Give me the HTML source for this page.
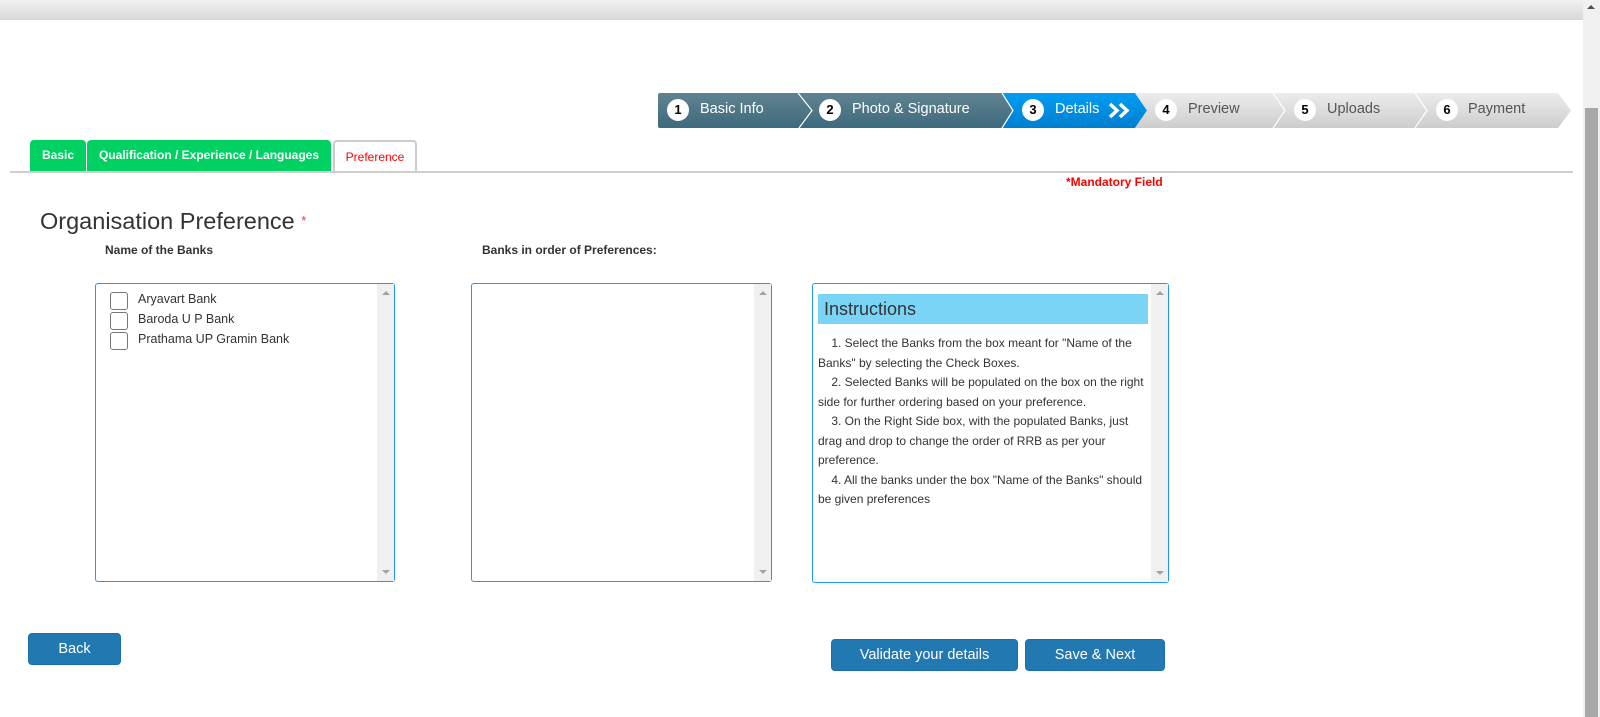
<!DOCTYPE html>
<html><head><style>
body{margin:0;width:1600px;height:717px;overflow:hidden;background:#fff;font-family:"Liberation Sans",Arial,sans-serif;position:relative}
.a{position:absolute}
.topbar{left:0;top:0;width:1583px;height:20px;background:linear-gradient(#f0f0f0,#d8d8d8)}
.sb{left:1583px;top:0;width:17px;height:717px;background:#f0f0f0}
.thumb{left:1585px;top:108px;width:13px;height:609px;background:#a8a8a8}
.circ{width:22px;height:22px;border-radius:50%;background:#fff;color:#000;font-weight:bold;font-size:13px;text-align:center;line-height:22px}
.st{font-size:14.5px;line-height:35px;top:92px}
.tab{top:140px;height:32px;line-height:30px;font-size:12px;font-weight:bold;color:#fff;background:#00d162;border-radius:4px 4px 0 0;text-align:center}
.box{border:1px solid #2196f3;border-radius:3px;background:#fff;box-sizing:border-box}
.scr{position:absolute;right:0;top:0;bottom:0;width:17px;background:#f0f0f0}
.up,.dn{position:absolute;left:5px;width:0;height:0;border-left:4px solid transparent;border-right:4px solid transparent}
.up{top:7px;border-bottom:4px solid #a3a3a3}.dn{bottom:7px;border-top:4px solid #a3a3a3}
.cb{width:16px;height:16px;border:1px solid #767676;border-radius:3px;left:14px}
.it{left:42px;font-size:12.5px;color:#333}
.btn{background:#2278b0;border:1px solid #1a6fa8;border-radius:4px;color:#fff;font-size:14.5px;text-align:center;box-sizing:border-box;line-height:30px}
.ins{font-size:12px;color:#333;line-height:19.5px}
</style></head><body>
<div class="a topbar"></div>
<div class="a sb"></div><div class="a thumb"></div>
<div class="a" style="left:1587px;top:5px;border-left:4px solid transparent;border-right:4px solid transparent;border-bottom:4px solid #505050"></div>

<svg class="a" style="left:0;top:0" width="1600" height="140">
<defs>
<linearGradient id="d" x1="0" y1="0" x2="0" y2="1"><stop offset="0" stop-color="#618391"/><stop offset="1" stop-color="#3d6a7d"/></linearGradient>
<linearGradient id="b" x1="0" y1="0" x2="0" y2="1"><stop offset="0" stop-color="#009df3"/><stop offset="1" stop-color="#007fcf"/></linearGradient>
<linearGradient id="g" x1="0" y1="0" x2="0" y2="1"><stop offset="0" stop-color="#ececec"/><stop offset="1" stop-color="#cdcdcd"/></linearGradient>
</defs>
<path d="M660 93 H798 L812 110.5 L799 128 H660 Q658 128 658 126 V95 Q658 93 660 93Z" fill="url(#d)"/>
<path d="M798 93 H1002 L1013 110.5 L1002 128 H799 L812 110.5Z" fill="url(#d)"/>
<path d="M1002 93 H1135 L1147 110.5 L1135 128 H1002 L1013 110.5Z" fill="url(#b)"/>
<path d="M1135 93 H1273 L1285 110.5 L1273 128 H1135 L1147 110.5Z" fill="url(#g)"/>
<path d="M1273 93 H1415 L1427 110.5 L1415 128 H1273 L1285 110.5Z" fill="url(#g)"/>
<path d="M1415 93 H1558 L1571 110.5 L1558 128 H1415 L1427 110.5Z" fill="url(#g)"/>
<g fill="none" stroke="#fff" stroke-width="1.2">
<path d="M798 93 L812 110.5 L799 128"/><path d="M1002 93 L1013 110.5 L1002 128"/>
<path d="M1273 93 L1285 110.5 L1273 128"/><path d="M1415 93 L1427 110.5 L1415 128"/>
</g>
<g fill="none" stroke="#fff" stroke-width="3.5">
<path d="M1110 104 L1117 110.5 L1110 117"/><path d="M1120 104 L1127 110.5 L1120 117"/>
</g>
</svg>
<div class="a circ" style="left:667px;top:99px">1</div><div class="a st" style="left:700px;color:#fff">Basic Info</div>
<div class="a circ" style="left:819px;top:99px">2</div><div class="a st" style="left:852px;color:#fff">Photo &amp; Signature</div>
<div class="a circ" style="left:1022px;top:99px">3</div><div class="a st" style="left:1055px;color:#fff">Details</div>
<div class="a circ" style="left:1155px;top:99px">4</div><div class="a st" style="left:1188px;color:#555">Preview</div>
<div class="a circ" style="left:1294px;top:99px">5</div><div class="a st" style="left:1327px;color:#555">Uploads</div>
<div class="a circ" style="left:1436px;top:99px">6</div><div class="a st" style="left:1468px;color:#555">Payment</div>

<div class="a tab" style="left:30px;width:56px">Basic</div>
<div class="a tab" style="left:87px;width:244px">Qualification / Experience / Languages</div>
<div class="a tab" style="left:333px;width:84px;background:#fff;border:2px solid #ccc;border-bottom:none;box-sizing:border-box;color:#f00;font-weight:normal">Preference</div>
<div class="a" style="left:10px;top:171px;width:1563px;height:2px;background:#cfcfcf"></div>
<div class="a" style="left:1066px;top:175px;font-size:12px;font-weight:bold;color:#f00">*Mandatory Field</div>

<div class="a" style="left:40px;top:208px;font-size:23.5px;color:#333">Organisation Preference <span style="color:#e33;font-size:13px;vertical-align:4px">*</span></div>
<div class="a" style="left:105px;top:243px;font-size:12px;font-weight:bold;color:#333">Name of the Banks</div>
<div class="a" style="left:482px;top:243px;font-size:12px;font-weight:bold;color:#333">Banks in order of Preferences:</div>

<div class="a box" style="left:95px;top:283px;width:300px;height:299px">
<div class="scr"><div class="up"></div><div class="dn"></div></div>
<div class="a cb" style="top:8px"></div><div class="a it" style="top:8px">Aryavart Bank</div>
<div class="a cb" style="top:28px"></div><div class="a it" style="top:28px">Baroda U P Bank</div>
<div class="a cb" style="top:48px"></div><div class="a it" style="top:48px">Prathama UP Gramin Bank</div>
</div>
<div class="a box" style="left:471px;top:283px;width:301px;height:299px">
<div class="scr"><div class="up"></div><div class="dn"></div></div>
</div>
<div class="a box" style="left:812px;top:283px;width:357px;height:300px">
<div class="scr"><div class="up"></div><div class="dn"></div></div>
<div class="a" style="left:5px;top:10px;width:330px;height:30px;background:#7ad4f5;font-size:18px;color:#333;line-height:30px;padding-left:6px;box-sizing:border-box">Instructions</div>
<div class="a ins" style="left:5px;top:50px;width:330px">
&nbsp;&nbsp;&nbsp;&nbsp;1. Select the Banks from the box meant for "Name of the Banks" by selecting the Check Boxes.<br>
&nbsp;&nbsp;&nbsp;&nbsp;2. Selected Banks will be populated on the box on the right side for further ordering based on your preference.<br>
&nbsp;&nbsp;&nbsp;&nbsp;3. On the Right Side box, with the populated Banks, just drag and drop to change the order of RRB as per your preference.<br>
&nbsp;&nbsp;&nbsp;&nbsp;4. All the banks under the box "Name of the Banks" should be given preferences</div>
</div>

<div class="a btn" style="left:28px;top:633px;width:93px;height:32px">Back</div>
<div class="a btn" style="left:831px;top:639px;width:187px;height:32px">Validate your details</div>
<div class="a btn" style="left:1025px;top:639px;width:140px;height:32px">Save &amp; Next</div>
</body></html>
